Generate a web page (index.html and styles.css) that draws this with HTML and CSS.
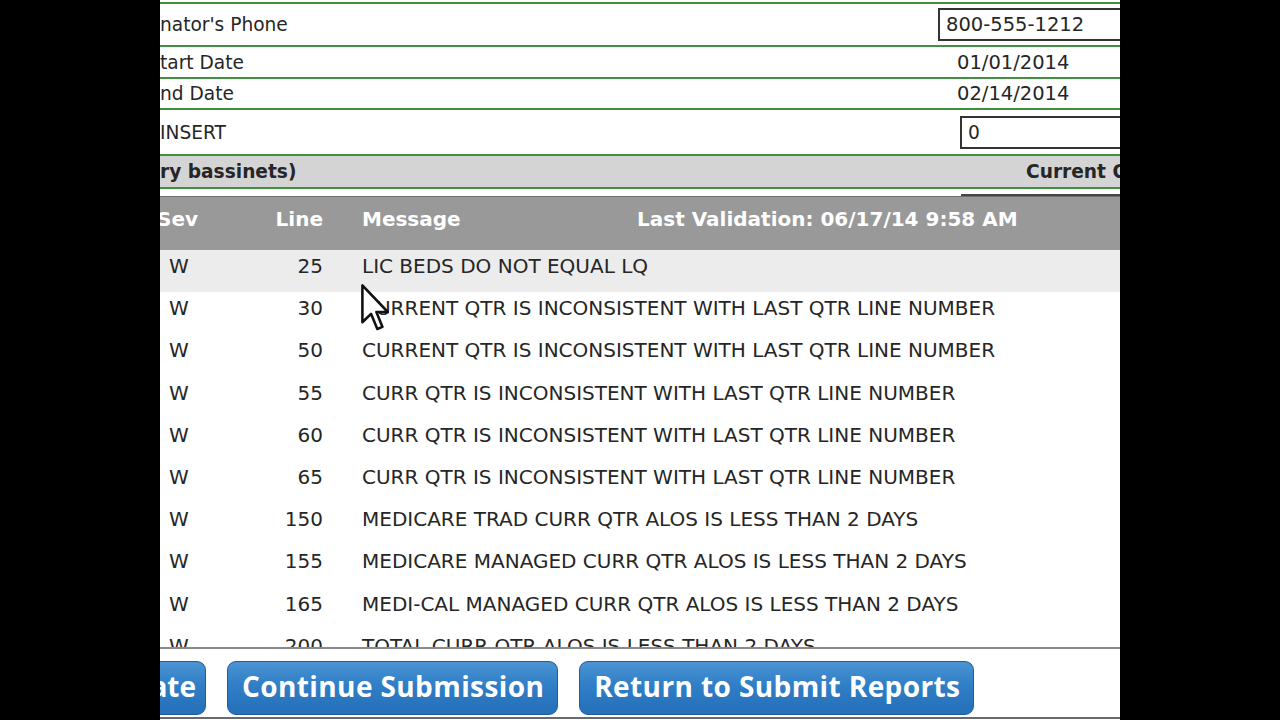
FILE: index.html
```html
<!DOCTYPE html>
<html>
<head>
<meta charset="utf-8">
<link rel="stylesheet" href="styles.css">
</head>
<body>
<div class="screen">
  <div class="form">
    <div class="frow r-phone">
      <span class="label">nator's Phone</span>
      <span class="field f-phone">800-555-1212</span>
    </div>
    <div class="frow r-start">
      <span class="label">tart Date</span>
      <span class="value">01/01/2014</span>
    </div>
    <div class="frow r-end">
      <span class="label">nd Date</span>
      <span class="value">02/14/2014</span>
    </div>
    <div class="frow r-insert">
      <span class="label">INSERT</span>
      <span class="field f-zero">0</span>
    </div>
    <div class="frow r-band">
      <span class="label bold">ry bassinets)</span>
      <span class="bold current">Current Q</span>
    </div>
    <div class="peek"><span class="peek-box"></span></div>
  </div>

  <div class="panel">
    <div class="thead">
      <span class="c-sev">Sev</span>
      <span class="c-line">Line</span>
      <span class="c-msg">Message</span>
      <span class="c-last">Last Validation: 06/17/14 9:58 AM</span>
    </div>
    <div class="tbody">
      <div class="trow hl"><span class="c-sev">W</span><span class="c-line">25</span><span class="c-msg">LIC BEDS DO NOT EQUAL LQ</span></div>
      <div class="trow"><span class="c-sev">W</span><span class="c-line">30</span><span class="c-msg">CURRENT QTR IS INCONSISTENT WITH LAST QTR LINE NUMBER</span></div>
      <div class="trow"><span class="c-sev">W</span><span class="c-line">50</span><span class="c-msg">CURRENT QTR IS INCONSISTENT WITH LAST QTR LINE NUMBER</span></div>
      <div class="trow"><span class="c-sev">W</span><span class="c-line">55</span><span class="c-msg">CURR QTR IS INCONSISTENT WITH LAST QTR LINE NUMBER</span></div>
      <div class="trow"><span class="c-sev">W</span><span class="c-line">60</span><span class="c-msg">CURR QTR IS INCONSISTENT WITH LAST QTR LINE NUMBER</span></div>
      <div class="trow"><span class="c-sev">W</span><span class="c-line">65</span><span class="c-msg">CURR QTR IS INCONSISTENT WITH LAST QTR LINE NUMBER</span></div>
      <div class="trow"><span class="c-sev">W</span><span class="c-line">150</span><span class="c-msg">MEDICARE TRAD CURR QTR ALOS IS LESS THAN 2 DAYS</span></div>
      <div class="trow"><span class="c-sev">W</span><span class="c-line">155</span><span class="c-msg">MEDICARE MANAGED CURR QTR ALOS IS LESS THAN 2 DAYS</span></div>
      <div class="trow"><span class="c-sev">W</span><span class="c-line">165</span><span class="c-msg">MEDI-CAL MANAGED CURR QTR ALOS IS LESS THAN 2 DAYS</span></div>
      <div class="trow"><span class="c-sev">W</span><span class="c-line">200</span><span class="c-msg">TOTAL CURR QTR ALOS IS LESS THAN 2 DAYS</span></div>
    </div>
    <div class="actions">
      <div class="cut-wrap"><span class="btn btn-cut">Validate</span></div>
      <span class="btn">Continue Submission</span>
      <span class="btn">Return to Submit Reports</span>
    </div>
  </div>

  <svg class="cursor" width="28" height="49" viewBox="0 0 12 21">
    <path d="M0.6 0.6 L0.6 16.4 L4.3 12.8 L7 19.3 L9.2 18.4 L6.6 12 L11.5 12 Z" fill="#fff" stroke="#111" stroke-width="1.1" stroke-linejoin="round"/>
  </svg>
</div>
</body>
</html>
```
FILE: styles.css
```css
html, body {
  margin: 0;
  padding: 0;
  background: #000;
}
.screen {
  position: relative;
  width: 960px;
  height: 720px;
  margin: 0 auto;
  background: #fff;
  overflow: hidden;
  font-family: "DejaVu Sans", sans-serif;
  color: #262626;
}
.form {
  padding-top: 2px;
}
.frow {
  display: flex;
  align-items: center;
  justify-content: space-between;
  border-bottom: 2px solid #3f8f3f;
  font-size: 18.6px;
  white-space: nowrap;
}
.r-phone { border-top: 2px solid #3f8f3f; height: 41px; }
.r-start { height: 30px; }
.r-end { height: 29px; }
.r-insert { height: 44px; }
.r-band { height: 31px; background: #d4d4d4; }
.bold { font-weight: bold; }
.field {
  box-sizing: border-box;
  border: 2px solid #333;
  border-right: none;
  background: #fff;
  padding-left: 6px;
  display: flex;
  align-items: center;
}
.f-phone { width: 182px; height: 33px; font-size: 19.5px; }
.f-zero { width: 160px; height: 33px; }
.value { width: 163px; font-size: 19.5px; }
.current { width: 94px; overflow: hidden; }
.peek {
  height: 7px;
  display: flex;
  justify-content: flex-end;
  align-items: flex-end;
}
.peek-box {
  width: 159px;
  height: 2px;
  border-top: 2px solid #444;
  border-left: 2px solid #444;
  box-sizing: border-box;
}
.panel {
  border-top: 1px solid #6e6e6e;
}
.thead {
  display: flex;
  align-items: center;
  height: 53px;
  padding-bottom: 10px;
  box-sizing: border-box;
  background: #999;
  color: #fff;
  font-weight: bold;
  font-size: 20px;
  white-space: nowrap;
}
.c-sev { width: 80px; padding-left: 9px; box-sizing: border-box; }
.thead .c-sev { padding-left: 0; margin-left: -3px; width: 83px; }
.c-line { width: 83px; text-align: right; }
.c-msg { padding-left: 39px; }
.thead .c-msg { width: 314px; box-sizing: border-box; }
.tbody {
  height: 397px;
  overflow: hidden;
  border-bottom: 2px solid #8a8a8a;
}
.trow {
  display: flex;
  align-items: center;
  height: 42.2px;
  padding-bottom: 10px;
  box-sizing: border-box;
  font-size: 20px;
  white-space: nowrap;
}
.trow.hl { background: #ececec; }
.actions {
  display: flex;
  gap: 21px;
  align-items: flex-start;
  height: 70px;
  padding-top: 12px;
  border-bottom: 2px solid #6a6a6a;
  box-sizing: border-box;
}
.cut-wrap {
  width: 46px;
  display: flex;
  justify-content: flex-end;
  overflow: hidden;
  flex: none;
}
.btn {
  box-sizing: border-box;
  flex: none;
  height: 54px;
  display: flex;
  align-items: center;
  padding: 0 13px 4px 14px;
  border: 1px solid #1d5d9c;
  border-radius: 9px;
  background: linear-gradient(#4c93d3, #2f7ec6 45%, #2570b8);
  color: #fff;
  font-family: "Open Sans", sans-serif;
  font-stretch: normal;
  font-weight: bold;
  font-size: 28px;
  letter-spacing: 0.4px;
  white-space: nowrap;
}
.btn-cut { padding-right: 9px; letter-spacing: 0; }
.cursor {
  position: absolute;
  left: 201px;
  top: 284px;
}
```
